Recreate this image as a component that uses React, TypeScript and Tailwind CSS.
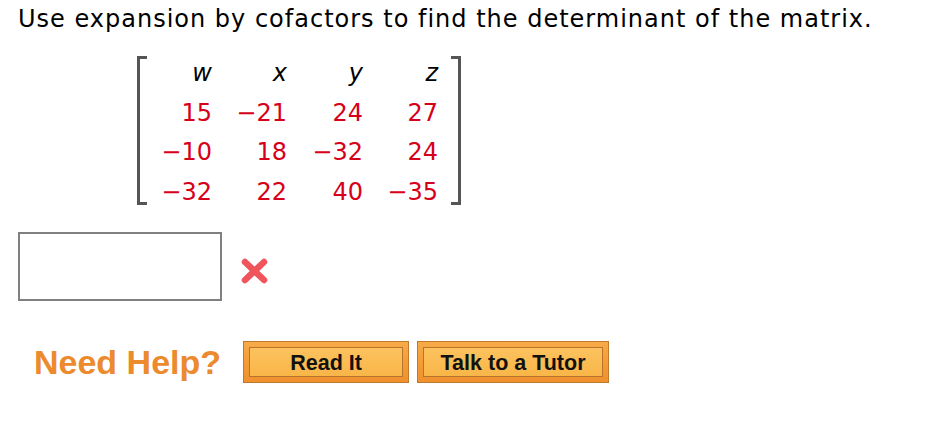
import React from "react";

const rows: string[][] = [
  ["15", "\u221221", "24", "27"],
  ["\u221210", "18", "\u221232", "24"],
  ["\u221232", "22", "40", "\u221235"],
];
const headers = ["w", "x", "y", "z"];

function OrangeButton({ label, width }: { label: string; width: string }) {
  return (
    <div
      className={`${width} h-[42px] border border-[#c0782c] bg-gradient-to-b from-[#f7ab48] via-[#f49c36] to-[#ee912e] p-[5px]`}
    >
      <div className="flex h-full w-full items-center justify-center border border-[#b8742e] bg-gradient-to-b from-[#fcc25e] to-[#f9b648] pt-[3px] text-[21.5px] font-bold leading-none text-[#111] [font-family:'Liberation_Sans',Arial,sans-serif]">
        {label}
      </div>
    </div>
  );
}

export default function App() {
  return (
    <div className="min-h-[424px] w-[926px] bg-white [font-family:'DejaVu_Sans',Verdana,sans-serif]">
      <div className="pl-[18px] pt-[3px] text-[24px] leading-[32px] tracking-[1px] text-black">
        Use expansion by cofactors to find the determinant of the matrix.
      </div>

      <div className="ml-[137px] mt-[19px] flex items-start">
        <div className="mt-[2px] h-[149px] w-[10px] border-y-[3px] border-l-[3px] border-[#555]" />
        <div className="grid grid-cols-[65px_75px_76px_75px] text-right text-[24px] leading-[39.5px]">
          {headers.map((h) => (
            <div key={h} className="italic text-black">
              {h}
            </div>
          ))}
          {rows.flat().map((v, i) => (
            <div key={i} className="text-[#d7001a]">
              {v}
            </div>
          ))}
        </div>
        <div className="ml-[13px] mt-[2px] h-[149px] w-[10px] border-y-[3px] border-r-[3px] border-[#555]" />
      </div>

      <div className="ml-[18px] mt-[20px] flex items-start">
        <div className="h-[69px] w-[204px] border-2 border-[#808080] bg-white" />
        <svg className="ml-[18px] mt-[25px]" width="29" height="28" viewBox="0 0 29 28">
          <g stroke="#f0545c" strokeWidth="6.5" strokeLinecap="round">
            <line x1="5" y1="5" x2="24" y2="23" />
            <line x1="24" y1="5" x2="5" y2="23" />
          </g>
        </svg>
      </div>

      <div className="ml-[34px] mt-[40px] flex items-center">
        <div className="text-[34px] font-bold leading-[38px] text-[#ec8a2e] [font-family:'Liberation_Sans',Arial,sans-serif]">
          Need Help?
        </div>
        <div className="ml-[22px] flex gap-[8px]">
          <OrangeButton label="Read It" width="w-[166px]" />
          <OrangeButton label="Talk to a Tutor" width="w-[192px]" />
        </div>
      </div>
    </div>
  );
}
